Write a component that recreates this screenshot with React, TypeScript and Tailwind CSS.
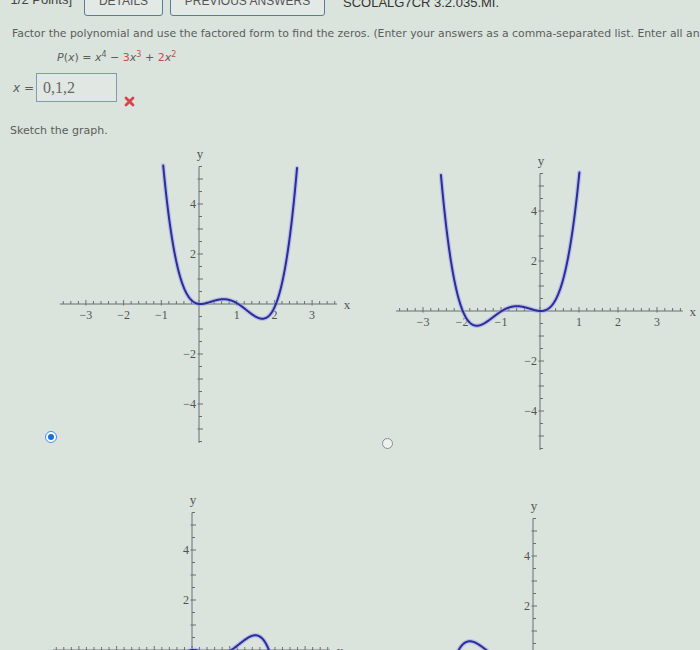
import React from "react";

type GraphProps = {
  f: (x: number) => number;
  ox: number;
  oy: number;
  ux: number;
  uy: number;
  shift?: number;
  className?: string;
};

function buildPath(
  f: (x: number) => number,
  ox: number,
  oy: number,
  ux: number,
  uy: number,
  shift: number
) {
  const segs: string[] = [];
  let cur: string[] = [];
  for (let i = -370; i <= 366; i++) {
    const x = i / 100;
    const y = 0.95 * f(x - shift);
    if (y <= 5.58 && y >= -5.58) {
      const px = (ox + x * ux).toFixed(2);
      const py = (oy - y * uy).toFixed(2);
      cur.push(`${cur.length === 0 ? "M" : "L"}${px},${py}`);
    } else if (cur.length) {
      segs.push(cur.join(" "));
      cur = [];
    }
  }
  if (cur.length) segs.push(cur.join(" "));
  return segs.join(" ");
}

function Graph({ f, ox, oy, ux, uy, shift = 0, className }: GraphProps) {
  const xMin = -3.69;
  const xMax = 3.66;
  const yTop = 5.5;
  const yBot = -5.56;
  const xTicks: number[] = [];
  for (let i = -18; i <= 18; i++) xTicks.push(i / 5);
  const yTicks: number[] = [];
  for (let i = -11; i <= 11; i++) yTicks.push(i / 2);
  const d = buildPath(f, ox, oy, ux, uy, shift);
  const labelStyle = { fontFamily: '"Liberation Serif", "DejaVu Serif", serif' };
  return (
    <svg
      width={305}
      height={310}
      className={`shrink-0 ${className ?? ""}`}
      style={{ overflow: "visible" }}
    >
      <g stroke="#6b6f6c" strokeWidth={1} fill="none">
        <line x1={ox + xMin * ux} y1={oy} x2={ox + xMax * ux} y2={oy} />
        <line x1={ox} y1={oy - yTop * uy} x2={ox} y2={oy - yBot * uy} />
        {xTicks.map((t) => {
          const major = Math.abs(t - Math.round(t)) < 1e-6;
          return (
            <line
              key={`x${t}`}
              x1={ox + t * ux}
              y1={oy - (major ? 4 : 3)}
              x2={ox + t * ux}
              y2={oy + (major ? 1.5 : 0)}
            />
          );
        })}
        {yTicks.map((t) => {
          const major = Math.abs(t - Math.round(t)) < 1e-6;
          return (
            <line
              key={`y${t}`}
              x1={ox - (major ? 1.5 : 0)}
              y1={oy - t * uy}
              x2={ox + (major ? 4 : 3)}
              y2={oy - t * uy}
            />
          );
        })}
      </g>
      <g fill="#4f5451" fontSize={12} style={labelStyle}>
        {[-3, -2, -1, 1, 2, 3].map((n) => (
          <text key={`lx${n}`} x={ox + n * ux} y={oy + 15} textAnchor="middle">
            {n < 0 ? `\u2212${-n}` : `${n}`}
          </text>
        ))}
        {[-4, -2, 2, 4].map((n) => (
          <text key={`ly${n}`} x={ox - 3} y={oy - n * uy + 4} textAnchor="end">
            {n < 0 ? `\u2212${-n}` : `${n}`}
          </text>
        ))}
        <text x={ox + 1} y={oy - yTop * uy - 9} textAnchor="middle" fontSize={13}>
          y
        </text>
        <text x={ox + xMax * ux + 10} y={oy + 5} textAnchor="middle" fontSize={13}>
          x
        </text>
      </g>
      <path
        d={d}
        stroke="#9ea4ea"
        strokeWidth={4.5}
        fill="none"
        strokeOpacity={0.55}
        strokeLinejoin="round"
        strokeLinecap="round"
      />
      <path
        d={d}
        stroke="#2b2d98"
        strokeWidth={2}
        fill="none"
        strokeLinejoin="round"
        strokeLinecap="round"
      />
    </svg>
  );
}

const f1 = (x: number) => x ** 4 - 3 * x ** 3 + 2 * x ** 2;
const f2 = (x: number) => x ** 4 + 3 * x ** 3 + 2 * x ** 2;
const f3 = (x: number) => -f1(x);
const f4 = (x: number) => -f2(x);

export default function App() {
  const sans = { fontFamily: '"DejaVu Sans", Verdana, sans-serif' };
  const arial = { fontFamily: '"Liberation Sans", Arial, sans-serif' };
  return (
    <div
      className="relative w-[700px] h-[650px] overflow-hidden bg-[#dbe3dd] text-[#5a5e5b]"
      style={sans}
    >
      {/* header (cut off at top) */}
      <div className="flex h-[16px] items-end overflow-hidden">
        <div
          className="w-[72px] shrink-0 flex justify-end text-[13px] leading-[28px] h-[28px] mb-[2px] text-[#444] whitespace-nowrap"
          style={arial}
        >
          1/2 Points]
        </div>
        <div
          className="shrink-0 ml-[12px] w-[79px] h-[30px] border-[1.5px] border-[#5b7c98] rounded-[3px] bg-[#e3e9e5] flex items-center justify-center text-[12px] text-[#555] pb-[1px]"
          style={arial}
        >
          DETAILS
        </div>
        <div
          className="shrink-0 ml-[7px] w-[155px] h-[30px] border-[1.5px] border-[#5b7c98] rounded-[3px] bg-[#e3e9e5] flex items-center justify-center text-[12px] text-[#555] pb-[1px]"
          style={arial}
        >
          PREVIOUS ANSWERS
        </div>
        <div
          className="shrink-0 ml-[18px] h-[28px] leading-[28px] mb-[-1px] text-[13px] text-[#333] whitespace-nowrap"
          style={arial}
        >
          SCOLALG7CR 3.2.035.MI.
        </div>
      </div>

      {/* question */}
      <div className="mt-[10px] pl-[12px] h-[16px] leading-[16px] text-[10.85px] whitespace-nowrap">
        Factor the polynomial and use the factored form to find the zeros. (Enter your answers as a
        comma-separated list. Enter all answers including repetitions.)
      </div>
      <div className="mt-[7px] pl-[57px] h-[17px] leading-[17px] text-[11px] whitespace-nowrap">
        <i>P</i>(<i>x</i>) = <i>x</i>
        <sup className="text-[8px]">4</sup> − <span className="text-[#c0504d]">3</span>
        <i>x</i>
        <sup className="text-[8px] text-[#c0504d]">3</sup> +{" "}
        <span className="text-[#c0504d]">2</span>
        <i>x</i>
        <sup className="text-[8px] text-[#c0504d]">2</sup>
      </div>

      {/* answer row */}
      <div className="mt-[7px] flex items-start h-[34px]">
        <div className="shrink-0 ml-[13px] mt-[7px] text-[12px] leading-[16px] w-[22px]">
          <i>x</i> =
        </div>
        <div
          className="shrink-0 ml-[1px] w-[81px] h-[29px] border-[1.5px] border-[#7d9cad] bg-[#e1e8e3] flex items-center pl-[6px] text-[16px] text-[#666]"
          style={{ fontFamily: '"Liberation Serif", "Times New Roman", serif' }}
        >
          0,1,2
        </div>
        <svg width={11} height={11} className="shrink-0 ml-[7px] mt-[23px]" viewBox="0 0 11 11">
          <path d="M2 2 L9 9 M9 2 L2 9" stroke="#d9434b" strokeWidth={2.8} strokeLinecap="round" />
        </svg>
      </div>

      <div className="mt-[16px] pl-[10px] h-[16px] leading-[16px] text-[11px]">
        Sketch the graph.
      </div>

      {/* graphs row 1 */}
      <div className="mt-[1px] flex h-[346px]">
        <div className="flex w-[340px] shrink-0 items-start">
          <div className="shrink-0 ml-[45px] mt-[291px] w-[12px] h-[12px] rounded-full border-[1.5px] border-[#3d8ef0] bg-white flex items-center justify-center">
            <div className="w-[6px] h-[6px] rounded-full bg-[#1a6fd8]" />
          </div>
          <Graph f={f1} ox={142} oy={164} ux={37.7} uy={25} shift={0.04} />
        </div>
        <div className="flex w-[360px] shrink-0 items-start">
          <div className="shrink-0 ml-[42px] mt-[298px] w-[11px] h-[11px] rounded-full border border-[#8a8e8b] bg-[#eef2ef]" />
          <Graph f={f2} ox={145} oy={164} ux={39} uy={25} shift={0.02} className="ml-[2px] mt-[7px]" />
        </div>
      </div>

      {/* graphs row 2 */}
      <div className="flex h-[310px]">
        <div className="flex w-[340px] shrink-0 items-start">
          <Graph f={f3} ox={142} oy={164} ux={37.7} uy={25} shift={0.04} className="ml-[50px]" />
        </div>
        <div className="flex w-[360px] shrink-0 items-start">
          <Graph f={f4} ox={145} oy={164} ux={39} uy={25} shift={0.02} className="ml-[48px] mt-[6px]" />
        </div>
      </div>
    </div>
  );
}
